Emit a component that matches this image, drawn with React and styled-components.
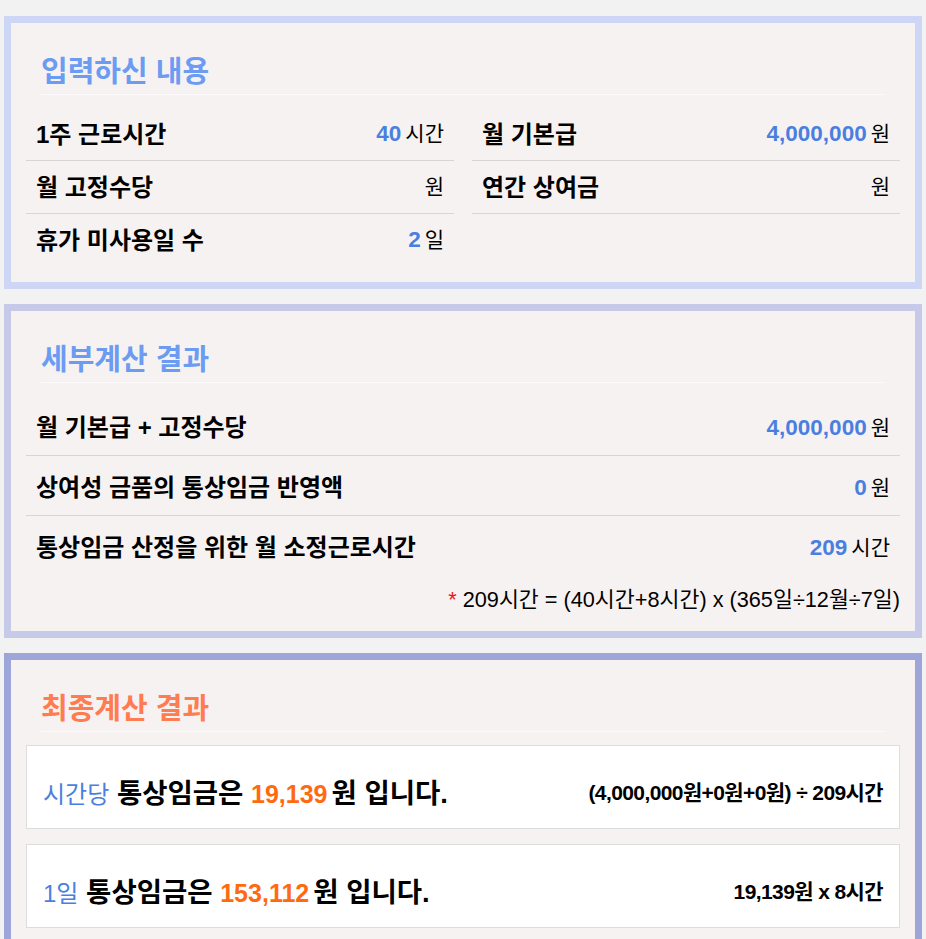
import React from "react";
import styled, { createGlobalStyle } from "styled-components";

const Global = createGlobalStyle`
  html, body { margin: 0; padding: 0; background: #f2f2f2; }
  body { font-family: "Liberation Sans", "Noto Sans CJK KR", sans-serif; color: #000; }
  * { box-sizing: border-box; }
`;

const Page = styled.div`
  padding: 16px 4px 0;
  display: flex;
  flex-direction: column;
  gap: 15px;
`;

const Section = styled.section`
  border: 7px solid ${(p) => p.$border};
  background: #f7f2f2;
  padding: 15px;
`;

const Title = styled.h2`
  margin: 0 15px 13px;
  padding: 17px 0 5px;
  font-size: 29px;
  line-height: 34px;
  font-weight: bold;
  color: ${(p) => p.$color};
  border-bottom: 1px solid #fcfafa;
`;

const Grid = styled.div`
  display: grid;
  grid-template-columns: 1fr 1fr;
  column-gap: 18px;
`;

const Column = styled.div`
  display: flex;
  flex-direction: column;
`;

const Row = styled.div`
  display: flex;
  align-items: center;
  justify-content: space-between;
  height: ${(p) => p.$h}px;
  padding: 0 10px ${(p) => p.$lift || 0}px;
  border-bottom: 1px solid ${(p) => (p.$noLine ? "transparent" : "#d6d6d6")};
`;

const Label = styled.span`
  font-size: 24px;
  font-weight: bold;
`;

const Value = styled.span`
  display: flex;
  align-items: baseline;
`;

const Num = styled.b`
  font-size: 22.5px;
  font-weight: bold;
  color: #4a7fe0;
  margin-right: 4px;
`;

const Unit = styled.span`
  font-size: 21px;
  font-weight: normal;
`;

const Note = styled.p`
  margin: 0;
  padding: 10px 0 2px;
  font-size: 21.7px;
  line-height: 28px;
  text-align: right;
`;

const Star = styled.span`
  color: #e8171b;
`;

const Cards = styled.div`
  display: flex;
  flex-direction: column;
  gap: 15px;
  margin-top: 2px;
`;

const Card = styled.div`
  display: flex;
  align-items: center;
  justify-content: space-between;
  height: 84px;
  padding: 8px 16px 0;
  background: #fff;
  border: 1px solid #dddddd;
`;

const Sentence = styled.div`
  font-size: 27.5px;
  font-weight: bold;
`;

const Lead = styled.span`
  font-size: 24px;
  font-weight: normal;
  color: #4a7fe0;
`;

const Amount = styled.span`
  font-size: 25px;
  color: #ff6a10;
  margin-right: 4px;
`;

const Formula = styled.span`
  font-size: 21px;
  font-weight: bold;
  letter-spacing: -0.6px;
`;

function Field({ label, num, unit, h, lift, noLine }) {
  return (
    <Row $h={h} $lift={lift} $noLine={noLine}>
      <Label>{label}</Label>
      <Value>
        {num && <Num>{num}</Num>}
        <Unit>{unit}</Unit>
      </Value>
    </Row>
  );
}

export default function App() {
  return (
    <>
      <Global />
      <Page>
        <Section $border="#cdd6f5">
          <Title $color="#6b9cf2">입력하신 내용</Title>
          <Grid>
            <Column>
              <Field h={53} lift={4} label="1주 근로시간" num="40" unit="시간" />
              <Field h={53} lift={4} label="월 고정수당" unit="원" />
              <Field h={53} lift={4} label="휴가 미사용일 수" num="2" unit="일" noLine />
            </Column>
            <Column>
              <Field h={53} lift={4} label="월 기본급" num="4,000,000" unit="원" />
              <Field h={53} lift={4} label="연간 상여금" unit="원" />
            </Column>
          </Grid>
        </Section>

        <Section $border="#c6c9e8">
          <Title $color="#6b9cf2">세부계산 결과</Title>
          <Column>
            <Field h={60} label="월 기본급 + 고정수당" num="4,000,000" unit="원" />
            <Field h={60} label="상여성 금품의 통상임금 반영액" num="0" unit="원" />
            <Field h={60} label="통상임금 산정을 위한 월 소정근로시간" num="209" unit="시간" noLine />
          </Column>
          <Note>
            <Star>*</Star> 209시간 = (40시간+8시간) x (365일÷12월÷7일)
          </Note>
        </Section>

        <Section $border="#9ea6d9">
          <Title $color="#ff7b50">최종계산 결과</Title>
          <Cards>
            <Card>
              <Sentence>
                <Lead>시간당</Lead> 통상임금은 <Amount>19,139</Amount>원 입니다.
              </Sentence>
              <Formula>(4,000,000원+0원+0원) ÷ 209시간</Formula>
            </Card>
            <Card>
              <Sentence>
                <Lead>1일</Lead> 통상임금은 <Amount>153,112</Amount>원 입니다.
              </Sentence>
              <Formula>19,139원 x 8시간</Formula>
            </Card>
          </Cards>
        </Section>
      </Page>
    </>
  );
}
